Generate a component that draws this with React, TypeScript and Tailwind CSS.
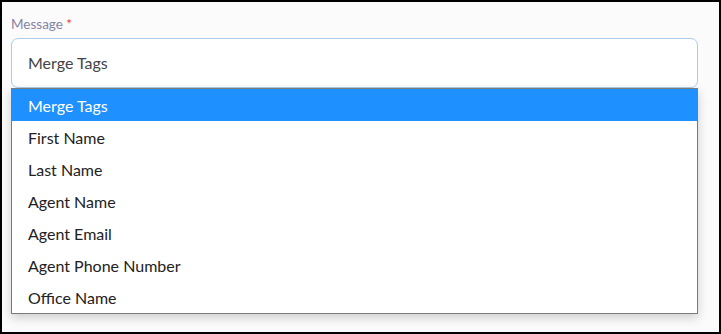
const tags = [
  'Merge Tags',
  'First Name',
  'Last Name',
  'Agent Name',
  'Agent Email',
  'Agent Phone Number',
  'Office Name',
];

export default function App() {
  return (
    <div
      className="w-[721px] h-[334px] border-2 border-black bg-[#fbfbfc] overflow-hidden"
      style={{ fontFamily: 'Lato, "Open Sans", sans-serif' }}
    >
      <div className="pl-[9px] pr-[21px] pt-[13px]">
        <label className="block text-[13.5px] leading-[18px] text-[#8583a3]">
          Message <span className="text-[#e53935]">*</span>
        </label>
        <div className="relative mt-[5px]">
          <div className="h-[50px] rounded-[7px] border border-[#a9cdea] bg-white px-[16px] flex items-center text-[16px] text-[#444]">
            Merge Tags
          </div>
          <ul className="absolute left-0 right-0 top-[50px] border border-[#7a7a7a] bg-white shadow-[0_4px_10px_rgba(0,0,0,0.18)]">
            {tags.map((tag, i) => (
              <li
                key={tag}
                className={
                  i === 0
                    ? 'h-[32px] px-[16px] pt-[1px] flex items-center text-[16px] bg-[#1e90ff] text-white'
                    : 'h-[32px] px-[16px] pt-[1px] flex items-center text-[16px] text-[#222]'
                }
              >
                {tag}
              </li>
            ))}
          </ul>
        </div>
      </div>
    </div>
  );
}
